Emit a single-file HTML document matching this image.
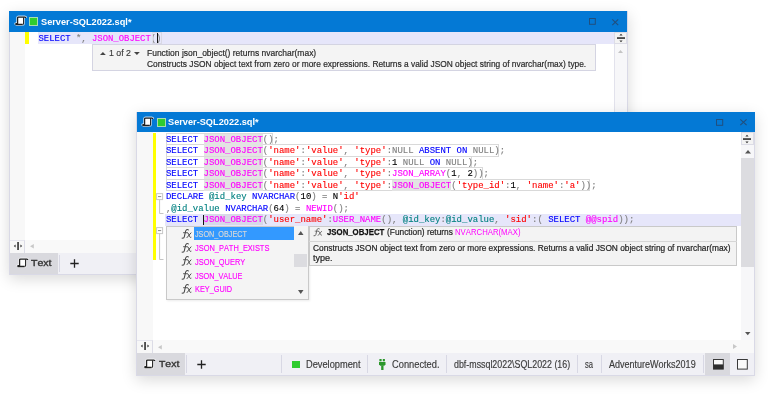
<!DOCTYPE html><html><head><meta charset="utf-8"><style>html,body{margin:0;padding:0;background:#fff;overflow:hidden;width:768px;height:401px;}#root{filter:blur(0.3px);position:relative;width:768px;height:401px;overflow:hidden;background:#fff;}</style></head><body><div id="root">
<div style="position:absolute;left:9px;top:11px;width:619px;height:264px;background:#fff;box-shadow:0 4px 14px rgba(0,0,0,0.15);border:1px solid #d9d9e6;border-top:none;box-sizing:border-box;"></div>
<div style="position:absolute;left:9px;top:11px;width:618px;height:21px;background:#0479d5;"></div>
<svg style="position:absolute;left:15px;top:15px;overflow:visible;" width="12" height="12" viewBox="0 0 12 12"><path d="M2.6 9.2 V3.1 Q2.6 2.0 3.7 2.0 H9.8 Q10.8 2.0 10.8 3.1" fill="none" stroke-width="2.8" stroke="rgba(255,255,255,0.75)"/><path d="M8.6 2.3 V8.6 Q8.6 9.5 7.6 9.5" fill="none" stroke-width="2.6" stroke="rgba(255,255,255,0.75)"/><path d="M0.5 9.6 Q0.5 8.7 1.4 8.7 H2.6 M0.7 9.5 H7.6" fill="none" stroke-width="2.9" stroke="rgba(255,255,255,0.75)"/><rect x="3.1" y="2.5" width="5" height="6.5" fill="#fff"/><path d="M2.6 9.2 V3.1 Q2.6 2.0 3.7 2.0 H9.8 Q10.8 2.0 10.8 3.1" fill="none" stroke-width="1.25" stroke="#222"/><path d="M8.6 2.3 V8.6 Q8.6 9.5 7.6 9.5" fill="none" stroke-width="1.1" stroke="#222"/><path d="M0.5 9.6 Q0.5 8.7 1.4 8.7 H2.6 M0.7 9.5 H7.6" fill="none" stroke-width="1.4" stroke="#222"/></svg>
<div style="position:absolute;left:30px;top:18px;width:7px;height:7px;background:#2fcc2f;box-shadow:0 0 0 1px #a8dcb0;"></div>
<div style="position:absolute;left:40.64px;top:16.80px;font-family:'Liberation Sans', sans-serif;font-size:9.5px;line-height:10.613px;color:#fff;white-space:pre;font-kerning:none;font-weight:bold;transform:scaleX(0.9680);transform-origin:0 0;">Server-SQL2022.sql*</div>
<svg style="position:absolute;left:588.7px;top:18.2px;overflow:visible;" width="8" height="8" viewBox="0 0 8 8"><rect x="0.5" y="0.5" width="5.8" height="5.8" fill="none" stroke="#214f7e" stroke-width="1"/></svg>
<svg style="position:absolute;left:612px;top:18.7px;overflow:visible;" width="8" height="8" viewBox="0 0 8 8"><path d="M0.3 0.3 L6.2 6.2 M6.2 0.3 L0.3 6.2" stroke="#214f7e" stroke-width="1.1"/></svg>
<div style="position:absolute;left:10px;top:32px;width:15px;height:208px;background:#f8f8f8;"></div>
<div style="position:absolute;left:25px;top:32px;width:4px;height:12px;background:#ffff00;"></div>
<div style="position:absolute;left:38px;top:32px;width:576px;height:12px;background:#e6e6fa;"></div>
<div style="position:absolute;left:38.5px;top:34.37px;font-family:'Liberation Mono', monospace;font-size:8.92px;line-height:10.105px;white-space:pre;"><span style="color:#0000ff;-webkit-text-stroke:0.12px #0000ff">SELECT</span><span style="color:#808080;-webkit-text-stroke:0.12px #808080"> *, </span><span style="color:#ff00ff;-webkit-text-stroke:0.12px #ff00ff">JSON_OBJECT</span><span style="color:#808080;-webkit-text-stroke:0.12px #808080">()</span></div>
<div style="position:absolute;left:152px;top:32px;width:10px;height:12px;border:1px solid #d8d8e4;border-left-color:#e0e0ea;box-sizing:border-box;"></div>
<div style="position:absolute;left:157px;top:33px;width:1px;height:10px;background:#111;"></div>
<div style="position:absolute;left:614px;top:32px;width:13px;height:208px;background:#f7f7f9;border-left:1px solid #e2e2ec;box-sizing:border-box;"></div>
<div style="position:absolute;left:614px;top:32px;width:13px;height:12px;background:#f3f3f3;border:1px solid #dcdce6;box-sizing:border-box;"></div>
<svg style="position:absolute;left:615.5px;top:33px;overflow:visible;" width="10" height="10" viewBox="0 0 10 10"><path d="M5 0.8 L6.6 2.6 H3.4 Z M5 9.2 L6.6 7.4 H3.4 Z" fill="#333"/><rect x="1" y="4.3" width="8" height="1.5" fill="#222"/></svg>
<svg style="position:absolute;left:617.8px;top:49.8px;overflow:visible;" width="5" height="3" viewBox="0 0 5 3"><path d="M0 3 L2.5 0 L5 3 Z" fill="#c4c4c4"/></svg>
<div style="position:absolute;left:92px;top:43.6px;width:504px;height:27.9px;background:#f4f4f4;border:1px solid #d4d4e2;box-sizing:border-box;"></div>
<svg style="position:absolute;left:100.0px;top:51.8px;overflow:visible;" width="5.8" height="3.0" viewBox="0 0 5.8 3.0"><path d="M0 3.0 L2.9 0 L5.8 3.0 Z" fill="#444"/></svg>
<div style="position:absolute;left:109.03px;top:48.17px;font-family:'Liberation Sans', sans-serif;font-size:9.2px;line-height:10.278px;color:#3a3a3a;white-space:pre;font-kerning:none;font-weight:normal;transform:scaleX(0.9563);transform-origin:0 0;-webkit-text-stroke:0.15px #3a3a3a;">1 of 2</div>
<svg style="position:absolute;left:133.9px;top:51.6px;overflow:visible;" width="5.8" height="3.0" viewBox="0 0 5.8 3.0"><path d="M0 0 L5.8 0 L2.9 3.0 Z" fill="#444"/></svg>
<div style="position:absolute;left:146.5px;top:48.17px;font-family:'Liberation Sans', sans-serif;font-size:9.2px;line-height:10.278px;color:#2a2a2a;white-space:pre;font-kerning:none;font-weight:normal;transform:scaleX(0.9230);transform-origin:0 0;-webkit-text-stroke:0.2px #2a2a2a;">Function json_object() returns nvarchar(max)</div>
<div style="position:absolute;left:146.77px;top:59.17px;font-family:'Liberation Sans', sans-serif;font-size:9.2px;line-height:10.278px;color:#2a2a2a;white-space:pre;font-kerning:none;font-weight:normal;transform:scaleX(0.9102);transform-origin:0 0;-webkit-text-stroke:0.2px #2a2a2a;">Constructs JSON object text from zero or more expressions. Returns a valid JSON object string of nvarchar(max) type.</div>
<div style="position:absolute;left:10px;top:240px;width:604px;height:13px;background:#f9f9f9;"></div>
<div style="position:absolute;left:10px;top:240px;width:15px;height:13px;background:#f7f7f7;border-right:1px solid #dcdce6;border-top:1px solid #e6e6ee;box-sizing:border-box;"></div>
<svg style="position:absolute;left:12.5px;top:242px;overflow:visible;" width="10" height="8" viewBox="0 0 10 8"><rect x="4.3" y="0" width="1.5" height="8" fill="#222"/><path d="M0.8 4 L2.6 2.4 V5.6 Z M9.2 4 L7.4 2.4 V5.6 Z" fill="#333"/></svg>
<svg style="position:absolute;left:30.2px;top:244.0px;overflow:visible;" width="3.8" height="4.6" viewBox="0 0 3.8 4.6"><path d="M3.8 0 L0 2.3 L3.8 4.6 Z" fill="#c8c8c8"/></svg>
<div style="position:absolute;left:10px;top:253px;width:617px;height:21px;background:#f0f0f5;"></div>
<div style="position:absolute;left:10px;top:253px;width:48px;height:21px;background:#d9d9de;"></div>
<svg style="position:absolute;left:17px;top:257px;overflow:visible;" width="12" height="12" viewBox="0 0 12 12"><path d="M2.6 9.2 V3.1 Q2.6 2.0 3.7 2.0 H9.8 Q10.8 2.0 10.8 3.1" fill="none" stroke-width="2.8" stroke="rgba(255,255,255,0.6)"/><path d="M8.6 2.3 V8.6 Q8.6 9.5 7.6 9.5" fill="none" stroke-width="2.6" stroke="rgba(255,255,255,0.6)"/><path d="M0.5 9.6 Q0.5 8.7 1.4 8.7 H2.6 M0.7 9.5 H7.6" fill="none" stroke-width="2.9" stroke="rgba(255,255,255,0.6)"/><rect x="3.1" y="2.5" width="5" height="6.5" fill="#fff"/><path d="M2.6 9.2 V3.1 Q2.6 2.0 3.7 2.0 H9.8 Q10.8 2.0 10.8 3.1" fill="none" stroke-width="1.25" stroke="#222"/><path d="M8.6 2.3 V8.6 Q8.6 9.5 7.6 9.5" fill="none" stroke-width="1.1" stroke="#222"/><path d="M0.5 9.6 Q0.5 8.7 1.4 8.7 H2.6 M0.7 9.5 H7.6" fill="none" stroke-width="1.4" stroke="#222"/></svg>
<div style="position:absolute;left:31.16px;top:258.27px;font-family:'Liberation Sans', sans-serif;font-size:9.2px;line-height:10.278px;color:#333;white-space:pre;font-kerning:none;font-weight:normal;transform:scaleX(1.1465);transform-origin:0 0;-webkit-text-stroke:0.35px #333;">Text</div>
<div style="position:absolute;left:59px;top:255px;width:1px;height:17px;background:#d8d8e4;"></div>
<svg style="position:absolute;left:69.5px;top:259px;overflow:visible;" width="9" height="9" viewBox="0 0 9 9"><path d="M4.5 0.3 V8.7 M0.3 4.5 H8.7" stroke="#222" stroke-width="1.3"/></svg>
<div style="position:absolute;left:136px;top:112px;width:619px;height:264px;background:#fff;box-shadow:0 4px 14px rgba(0,0,0,0.15);border:1px solid #d9d9e6;border-top:none;box-sizing:border-box;"></div>
<div style="position:absolute;left:137px;top:112px;width:618px;height:20px;background:#0479d5;"></div>
<svg style="position:absolute;left:142px;top:116px;overflow:visible;" width="12" height="12" viewBox="0 0 12 12"><path d="M2.6 9.2 V3.1 Q2.6 2.0 3.7 2.0 H9.8 Q10.8 2.0 10.8 3.1" fill="none" stroke-width="2.8" stroke="rgba(255,255,255,0.75)"/><path d="M8.6 2.3 V8.6 Q8.6 9.5 7.6 9.5" fill="none" stroke-width="2.6" stroke="rgba(255,255,255,0.75)"/><path d="M0.5 9.6 Q0.5 8.7 1.4 8.7 H2.6 M0.7 9.5 H7.6" fill="none" stroke-width="2.9" stroke="rgba(255,255,255,0.75)"/><rect x="3.1" y="2.5" width="5" height="6.5" fill="#fff"/><path d="M2.6 9.2 V3.1 Q2.6 2.0 3.7 2.0 H9.8 Q10.8 2.0 10.8 3.1" fill="none" stroke-width="1.25" stroke="#222"/><path d="M8.6 2.3 V8.6 Q8.6 9.5 7.6 9.5" fill="none" stroke-width="1.1" stroke="#222"/><path d="M0.5 9.6 Q0.5 8.7 1.4 8.7 H2.6 M0.7 9.5 H7.6" fill="none" stroke-width="1.4" stroke="#222"/></svg>
<div style="position:absolute;left:157.5px;top:119px;width:7.0px;height:7px;background:#2fcc2f;box-shadow:0 0 0 1px #a8dcb0;"></div>
<div style="position:absolute;left:168.13px;top:116.60px;font-family:'Liberation Sans', sans-serif;font-size:9.5px;line-height:10.613px;color:#fff;white-space:pre;font-kerning:none;font-weight:bold;transform:scaleX(0.9690);transform-origin:0 0;">Server-SQL2022.sql*</div>
<svg style="position:absolute;left:715.8px;top:119px;overflow:visible;" width="8" height="8" viewBox="0 0 8 8"><rect x="0.5" y="0.5" width="6.2" height="5.8" fill="none" stroke="#214f7e" stroke-width="1"/></svg>
<svg style="position:absolute;left:739.6px;top:119.3px;overflow:visible;" width="8" height="8" viewBox="0 0 8 8"><path d="M0.3 0.3 L6.6 6.2 M6.6 0.3 L0.3 6.2" stroke="#214f7e" stroke-width="1.1"/></svg>
<div style="position:absolute;left:137px;top:132px;width:16px;height:208px;background:#f8f8f8;"></div>
<div style="position:absolute;left:153px;top:133px;width:3px;height:126.5px;background:#ffff00;"></div>
<div style="position:absolute;left:165px;top:214.26px;width:576px;height:11.28000000000003px;background:#e6e6fa;"></div>
<div style="position:absolute;left:165.5px;top:133.0px;width:107.19999999999999px;height:12.079999999999984px;border:1px solid #d9d9d9;box-sizing:border-box;"></div>
<div style="position:absolute;left:165.5px;top:144.48px;width:333.16px;height:12.080000000000013px;border:1px solid #d9d9d9;box-sizing:border-box;"></div>
<div style="position:absolute;left:165.5px;top:155.96px;width:306.25999999999993px;height:12.079999999999984px;border:1px solid #d9d9d9;box-sizing:border-box;"></div>
<div style="position:absolute;left:165.5px;top:167.44px;width:317.02000000000004px;height:12.079999999999984px;border:1px solid #d9d9d9;box-sizing:border-box;"></div>
<div style="position:absolute;left:165.5px;top:178.92px;width:424.62px;height:12.080000000000013px;border:1px solid #d9d9d9;box-sizing:border-box;"></div>
<div style="position:absolute;left:203.56px;top:134.0px;width:59.18000000000001px;height:10.879999999999995px;background:#e3e3e3;"></div>
<div style="position:absolute;left:203.56px;top:145.48px;width:59.18000000000001px;height:10.880000000000024px;background:#e3e3e3;"></div>
<div style="position:absolute;left:203.56px;top:156.96px;width:59.18000000000001px;height:10.879999999999995px;background:#e3e3e3;"></div>
<div style="position:absolute;left:203.56px;top:168.44px;width:59.18000000000001px;height:10.879999999999995px;background:#e3e3e3;"></div>
<div style="position:absolute;left:203.56px;top:179.92px;width:59.18000000000001px;height:10.880000000000024px;background:#e3e3e3;"></div>
<div style="position:absolute;left:391.86px;top:179.92px;width:59.17999999999995px;height:10.880000000000024px;background:#e3e3e3;"></div>
<div style="position:absolute;left:203.56px;top:214.35999999999999px;width:59.18000000000001px;height:10.880000000000024px;background:#d8d8e8;"></div>
<div style="position:absolute;left:165.9px;top:134.73px;font-family:'Liberation Mono', monospace;font-size:8.97px;line-height:10.161px;white-space:pre;"><span style="color:#0000ff;-webkit-text-stroke:0.12px #0000ff">SELECT</span><span style="color:#808080;-webkit-text-stroke:0.12px #808080"> </span><span style="color:#ff00ff;-webkit-text-stroke:0.12px #ff00ff">JSON_OBJECT</span><span style="color:#808080;-webkit-text-stroke:0.12px #808080">();</span></div>
<div style="position:absolute;left:165.9px;top:146.21px;font-family:'Liberation Mono', monospace;font-size:8.97px;line-height:10.161px;white-space:pre;"><span style="color:#0000ff;-webkit-text-stroke:0.12px #0000ff">SELECT</span><span style="color:#808080;-webkit-text-stroke:0.12px #808080"> </span><span style="color:#ff00ff;-webkit-text-stroke:0.12px #ff00ff">JSON_OBJECT</span><span style="color:#808080;-webkit-text-stroke:0.12px #808080">(</span><span style="color:#ff0000;-webkit-text-stroke:0.12px #ff0000">'name'</span><span style="color:#808080;-webkit-text-stroke:0.12px #808080">:</span><span style="color:#ff0000;-webkit-text-stroke:0.12px #ff0000">'value'</span><span style="color:#808080;-webkit-text-stroke:0.12px #808080">, </span><span style="color:#ff0000;-webkit-text-stroke:0.12px #ff0000">'type'</span><span style="color:#808080;-webkit-text-stroke:0.12px #808080">:NULL </span><span style="color:#0000ff;-webkit-text-stroke:0.12px #0000ff">ABSENT ON</span><span style="color:#808080;-webkit-text-stroke:0.12px #808080"> NULL);</span></div>
<div style="position:absolute;left:165.9px;top:157.69px;font-family:'Liberation Mono', monospace;font-size:8.97px;line-height:10.161px;white-space:pre;"><span style="color:#0000ff;-webkit-text-stroke:0.12px #0000ff">SELECT</span><span style="color:#808080;-webkit-text-stroke:0.12px #808080"> </span><span style="color:#ff00ff;-webkit-text-stroke:0.12px #ff00ff">JSON_OBJECT</span><span style="color:#808080;-webkit-text-stroke:0.12px #808080">(</span><span style="color:#ff0000;-webkit-text-stroke:0.12px #ff0000">'name'</span><span style="color:#808080;-webkit-text-stroke:0.12px #808080">:</span><span style="color:#ff0000;-webkit-text-stroke:0.12px #ff0000">'value'</span><span style="color:#808080;-webkit-text-stroke:0.12px #808080">, </span><span style="color:#ff0000;-webkit-text-stroke:0.12px #ff0000">'type'</span><span style="color:#808080;-webkit-text-stroke:0.12px #808080">:</span><span style="color:#000000;-webkit-text-stroke:0.12px #000000">1</span><span style="color:#808080;-webkit-text-stroke:0.12px #808080"> NULL </span><span style="color:#0000ff;-webkit-text-stroke:0.12px #0000ff">ON</span><span style="color:#808080;-webkit-text-stroke:0.12px #808080"> NULL);</span></div>
<div style="position:absolute;left:165.9px;top:169.17px;font-family:'Liberation Mono', monospace;font-size:8.97px;line-height:10.161px;white-space:pre;"><span style="color:#0000ff;-webkit-text-stroke:0.12px #0000ff">SELECT</span><span style="color:#808080;-webkit-text-stroke:0.12px #808080"> </span><span style="color:#ff00ff;-webkit-text-stroke:0.12px #ff00ff">JSON_OBJECT</span><span style="color:#808080;-webkit-text-stroke:0.12px #808080">(</span><span style="color:#ff0000;-webkit-text-stroke:0.12px #ff0000">'name'</span><span style="color:#808080;-webkit-text-stroke:0.12px #808080">:</span><span style="color:#ff0000;-webkit-text-stroke:0.12px #ff0000">'value'</span><span style="color:#808080;-webkit-text-stroke:0.12px #808080">, </span><span style="color:#ff0000;-webkit-text-stroke:0.12px #ff0000">'type'</span><span style="color:#808080;-webkit-text-stroke:0.12px #808080">:</span><span style="color:#ff00ff;-webkit-text-stroke:0.12px #ff00ff">JSON_ARRAY</span><span style="color:#808080;-webkit-text-stroke:0.12px #808080">(</span><span style="color:#000000;-webkit-text-stroke:0.12px #000000">1</span><span style="color:#808080;-webkit-text-stroke:0.12px #808080">, </span><span style="color:#000000;-webkit-text-stroke:0.12px #000000">2</span><span style="color:#808080;-webkit-text-stroke:0.12px #808080">));</span></div>
<div style="position:absolute;left:165.9px;top:180.65px;font-family:'Liberation Mono', monospace;font-size:8.97px;line-height:10.161px;white-space:pre;"><span style="color:#0000ff;-webkit-text-stroke:0.12px #0000ff">SELECT</span><span style="color:#808080;-webkit-text-stroke:0.12px #808080"> </span><span style="color:#ff00ff;-webkit-text-stroke:0.12px #ff00ff">JSON_OBJECT</span><span style="color:#808080;-webkit-text-stroke:0.12px #808080">(</span><span style="color:#ff0000;-webkit-text-stroke:0.12px #ff0000">'name'</span><span style="color:#808080;-webkit-text-stroke:0.12px #808080">:</span><span style="color:#ff0000;-webkit-text-stroke:0.12px #ff0000">'value'</span><span style="color:#808080;-webkit-text-stroke:0.12px #808080">, </span><span style="color:#ff0000;-webkit-text-stroke:0.12px #ff0000">'type'</span><span style="color:#808080;-webkit-text-stroke:0.12px #808080">:</span><span style="color:#ff00ff;-webkit-text-stroke:0.12px #ff00ff">JSON_OBJECT</span><span style="color:#808080;-webkit-text-stroke:0.12px #808080">(</span><span style="color:#ff0000;-webkit-text-stroke:0.12px #ff0000">'type_id'</span><span style="color:#808080;-webkit-text-stroke:0.12px #808080">:</span><span style="color:#000000;-webkit-text-stroke:0.12px #000000">1</span><span style="color:#808080;-webkit-text-stroke:0.12px #808080">, </span><span style="color:#ff0000;-webkit-text-stroke:0.12px #ff0000">'name'</span><span style="color:#808080;-webkit-text-stroke:0.12px #808080">:</span><span style="color:#ff0000;-webkit-text-stroke:0.12px #ff0000">'a'</span><span style="color:#808080;-webkit-text-stroke:0.12px #808080">));</span></div>
<div style="position:absolute;left:165.9px;top:192.13px;font-family:'Liberation Mono', monospace;font-size:8.97px;line-height:10.161px;white-space:pre;"><span style="color:#0000ff;-webkit-text-stroke:0.12px #0000ff">DECLARE</span><span style="color:#808080;-webkit-text-stroke:0.12px #808080"> </span><span style="color:#008080;-webkit-text-stroke:0.12px #008080">@id_key</span><span style="color:#808080;-webkit-text-stroke:0.12px #808080"> </span><span style="color:#0000ff;-webkit-text-stroke:0.12px #0000ff">NVARCHAR</span><span style="color:#808080;-webkit-text-stroke:0.12px #808080">(</span><span style="color:#000000;-webkit-text-stroke:0.12px #000000">10</span><span style="color:#808080;-webkit-text-stroke:0.12px #808080">) = </span><span style="color:#000000;-webkit-text-stroke:0.12px #000000">N</span><span style="color:#ff0000;-webkit-text-stroke:0.12px #ff0000">'id'</span></div>
<div style="position:absolute;left:165.9px;top:203.61px;font-family:'Liberation Mono', monospace;font-size:8.97px;line-height:10.161px;white-space:pre;"><span style="color:#808080;-webkit-text-stroke:0.12px #808080">,</span><span style="color:#008080;-webkit-text-stroke:0.12px #008080">@id_value</span><span style="color:#808080;-webkit-text-stroke:0.12px #808080"> </span><span style="color:#0000ff;-webkit-text-stroke:0.12px #0000ff">NVARCHAR</span><span style="color:#808080;-webkit-text-stroke:0.12px #808080">(</span><span style="color:#000000;-webkit-text-stroke:0.12px #000000">64</span><span style="color:#808080;-webkit-text-stroke:0.12px #808080">) = </span><span style="color:#ff00ff;-webkit-text-stroke:0.12px #ff00ff">NEWID</span><span style="color:#808080;-webkit-text-stroke:0.12px #808080">();</span></div>
<div style="position:absolute;left:165.9px;top:215.09px;font-family:'Liberation Mono', monospace;font-size:8.97px;line-height:10.161px;white-space:pre;"><span style="color:#0000ff;-webkit-text-stroke:0.12px #0000ff">SELECT</span><span style="color:#808080;-webkit-text-stroke:0.12px #808080"> </span><span style="color:#ff00ff;-webkit-text-stroke:0.12px #ff00ff">JSON_OBJECT</span><span style="color:#808080;-webkit-text-stroke:0.12px #808080">(</span><span style="color:#ff0000;-webkit-text-stroke:0.12px #ff0000">'user_name'</span><span style="color:#808080;-webkit-text-stroke:0.12px #808080">:</span><span style="color:#ff00ff;-webkit-text-stroke:0.12px #ff00ff">USER_NAME</span><span style="color:#808080;-webkit-text-stroke:0.12px #808080">(), </span><span style="color:#008080;-webkit-text-stroke:0.12px #008080">@id_key</span><span style="color:#808080;-webkit-text-stroke:0.12px #808080">:</span><span style="color:#008080;-webkit-text-stroke:0.12px #008080">@id_value</span><span style="color:#808080;-webkit-text-stroke:0.12px #808080">, </span><span style="color:#ff0000;-webkit-text-stroke:0.12px #ff0000">'sid'</span><span style="color:#808080;-webkit-text-stroke:0.12px #808080">:( </span><span style="color:#0000ff;-webkit-text-stroke:0.12px #0000ff">SELECT</span><span style="color:#808080;-webkit-text-stroke:0.12px #808080"> </span><span style="color:#ff00ff;-webkit-text-stroke:0.12px #ff00ff">@@spid</span><span style="color:#808080;-webkit-text-stroke:0.12px #808080">));</span></div>
<div style="position:absolute;left:203.26px;top:214.95999999999998px;width:1.200000000000017px;height:9.78000000000003px;background:#111;"></div>
<svg style="position:absolute;left:155.5px;top:192.5px;overflow:visible;" width="8" height="22" viewBox="0 0 8 22"><rect x="0.6" y="0.6" width="6" height="6" fill="#fff" stroke="#c8c8c8"/><path d="M2 3.6 H5.2" stroke="#8a8a8a"/><path d="M3.6 6.6 V20.5 H7.5" fill="none" stroke="#c4c4c4"/></svg>
<svg style="position:absolute;left:155.5px;top:226.5px;overflow:visible;" width="8" height="34" viewBox="0 0 8 34"><rect x="0.6" y="0.6" width="6" height="6" fill="#fff" stroke="#c8c8c8"/><path d="M2 3.6 H5.2" stroke="#8a8a8a"/><path d="M3.6 6.6 V32.5 H7.5" fill="none" stroke="#c4c4c4"/></svg>
<div style="position:absolute;left:741px;top:132px;width:13px;height:208px;background:#f7f7f9;"></div>
<div style="position:absolute;left:741px;top:132px;width:13px;height:12.5px;background:#f3f3f3;border:1px solid #dcdce6;box-sizing:border-box;"></div>
<svg style="position:absolute;left:742.2px;top:134.4px;overflow:visible;" width="10" height="10" viewBox="0 0 10 10"><path d="M5 0.8 L6.6 2.6 H3.4 Z M5 9.2 L6.6 7.4 H3.4 Z" fill="#333"/><rect x="1" y="4.3" width="8" height="1.5" fill="#222"/></svg>
<svg style="position:absolute;left:745.0px;top:150px;overflow:visible;" width="6" height="3.6" viewBox="0 0 6 3.6"><path d="M0 3.6 L3.0 0 L6 3.6 Z" fill="#555"/></svg>
<div style="position:absolute;left:741px;top:158px;width:13px;height:108.5px;background:#dcdce0;"></div>
<svg style="position:absolute;left:745.25px;top:331.8px;overflow:visible;" width="5.5" height="3.2" viewBox="0 0 5.5 3.2"><path d="M0 0 L5.5 0 L2.75 3.2 Z" fill="#555"/></svg>
<div style="position:absolute;left:137px;top:340px;width:617px;height:13px;background:#f9f9f9;"></div>
<div style="position:absolute;left:137px;top:340px;width:16px;height:13px;background:#f7f7f7;border-right:1px solid #dcdce6;border-top:1px solid #e6e6ee;box-sizing:border-box;"></div>
<svg style="position:absolute;left:140px;top:342.2px;overflow:visible;" width="10" height="8" viewBox="0 0 10 8"><rect x="4.3" y="0" width="1.5" height="8" fill="#222"/><path d="M0.8 4 L2.6 2.4 V5.6 Z M9.2 4 L7.4 2.4 V5.6 Z" fill="#333"/></svg>
<svg style="position:absolute;left:157.8px;top:344.59999999999997px;overflow:visible;" width="3.8" height="4.6" viewBox="0 0 3.8 4.6"><path d="M3.8 0 L0 2.3 L3.8 4.6 Z" fill="#c8c8c8"/></svg>
<svg style="position:absolute;left:732.5px;top:344.0px;overflow:visible;" width="4" height="5" viewBox="0 0 4 5"><path d="M0 0 L4 2.5 L0 5 Z" fill="#c8c8c8"/></svg>
<div style="position:absolute;left:137px;top:353px;width:617px;height:22px;background:#f0f0f5;"></div>
<div style="position:absolute;left:137px;top:353px;width:48px;height:22px;background:#d9d9de;"></div>
<svg style="position:absolute;left:144px;top:358px;overflow:visible;" width="12" height="12" viewBox="0 0 12 12"><path d="M2.6 9.2 V3.1 Q2.6 2.0 3.7 2.0 H9.8 Q10.8 2.0 10.8 3.1" fill="none" stroke-width="2.8" stroke="rgba(255,255,255,0.6)"/><path d="M8.6 2.3 V8.6 Q8.6 9.5 7.6 9.5" fill="none" stroke-width="2.6" stroke="rgba(255,255,255,0.6)"/><path d="M0.5 9.6 Q0.5 8.7 1.4 8.7 H2.6 M0.7 9.5 H7.6" fill="none" stroke-width="2.9" stroke="rgba(255,255,255,0.6)"/><rect x="3.1" y="2.5" width="5" height="6.5" fill="#fff"/><path d="M2.6 9.2 V3.1 Q2.6 2.0 3.7 2.0 H9.8 Q10.8 2.0 10.8 3.1" fill="none" stroke-width="1.25" stroke="#222"/><path d="M8.6 2.3 V8.6 Q8.6 9.5 7.6 9.5" fill="none" stroke-width="1.1" stroke="#222"/><path d="M0.5 9.6 Q0.5 8.7 1.4 8.7 H2.6 M0.7 9.5 H7.6" fill="none" stroke-width="1.4" stroke="#222"/></svg>
<div style="position:absolute;left:158.77px;top:358.67px;font-family:'Liberation Sans', sans-serif;font-size:9.2px;line-height:10.278px;color:#333;white-space:pre;font-kerning:none;font-weight:normal;transform:scaleX(1.1352);transform-origin:0 0;-webkit-text-stroke:0.35px #333;">Text</div>
<div style="position:absolute;left:186px;top:355px;width:1px;height:18px;background:#d8d8e4;"></div>
<div style="position:absolute;left:281px;top:355px;width:1px;height:18px;background:#d8d8e4;"></div>
<div style="position:absolute;left:367px;top:355px;width:1px;height:18px;background:#d8d8e4;"></div>
<div style="position:absolute;left:446px;top:355px;width:1px;height:18px;background:#d8d8e4;"></div>
<div style="position:absolute;left:577px;top:355px;width:1px;height:18px;background:#d8d8e4;"></div>
<div style="position:absolute;left:601px;top:355px;width:1px;height:18px;background:#d8d8e4;"></div>
<div style="position:absolute;left:703px;top:355px;width:1px;height:18px;background:#d8d8e4;"></div>
<svg style="position:absolute;left:196.5px;top:359.5px;overflow:visible;" width="9" height="9" viewBox="0 0 9 9"><path d="M4.5 0.3 V8.7 M0.3 4.5 H8.7" stroke="#222" stroke-width="1.3"/></svg>
<div style="position:absolute;left:292px;top:361px;width:8px;height:7px;background:#2fcc2f;"></div>
<div style="position:absolute;left:305.54px;top:358.55px;font-family:'Liberation Sans', sans-serif;font-size:10px;line-height:11.172px;color:#3a3a3a;white-space:pre;font-kerning:none;font-weight:normal;transform:scaleX(0.9254);transform-origin:0 0;-webkit-text-stroke:0.15px #3a3a3a;">Development</div>
<svg style="position:absolute;left:378.7px;top:358.7px;overflow:visible;" width="7" height="11" viewBox="0 0 7 11"><rect x="0.4" y="0" width="2.2" height="2.3" fill="#2a962a"/><rect x="3.8" y="0" width="2.1" height="2.3" fill="#2a962a"/><path d="M0 3.1 H6.5 V5.2 L5.4 6.8 H1.1 L0 5.2 Z" fill="#2a962a"/><rect x="2.2" y="6.5" width="2.3" height="4.5" fill="#2a962a"/></svg>
<div style="position:absolute;left:391.63px;top:358.55px;font-family:'Liberation Sans', sans-serif;font-size:10px;line-height:11.172px;color:#3a3a3a;white-space:pre;font-kerning:none;font-weight:normal;transform:scaleX(0.9291);transform-origin:0 0;-webkit-text-stroke:0.15px #3a3a3a;">Connected.</div>
<div style="position:absolute;left:453.83px;top:358.55px;font-family:'Liberation Sans', sans-serif;font-size:10px;line-height:11.172px;color:#3a3a3a;white-space:pre;font-kerning:none;font-weight:normal;transform:scaleX(0.8852);transform-origin:0 0;-webkit-text-stroke:0.15px #3a3a3a;">dbf-mssql2022\SQL2022 (16)</div>
<div style="position:absolute;left:585.29px;top:358.55px;font-family:'Liberation Sans', sans-serif;font-size:10px;line-height:11.172px;color:#3a3a3a;white-space:pre;font-kerning:none;font-weight:normal;transform:scaleX(0.7585);transform-origin:0 0;-webkit-text-stroke:0.15px #3a3a3a;">sa</div>
<div style="position:absolute;left:609.18px;top:358.55px;font-family:'Liberation Sans', sans-serif;font-size:10px;line-height:11.172px;color:#3a3a3a;white-space:pre;font-kerning:none;font-weight:normal;transform:scaleX(0.9010);transform-origin:0 0;-webkit-text-stroke:0.15px #3a3a3a;">AdventureWorks2019</div>
<div style="position:absolute;left:705px;top:353px;width:25px;height:22px;background:#d9d9de;"></div>
<svg style="position:absolute;left:712.5px;top:358.8px;overflow:visible;" width="11" height="11" viewBox="0 0 11 11"><rect x="0.5" y="0.5" width="9.8" height="9.6" fill="#fafafa" stroke="#3a3a3a" stroke-width="1"/><rect x="0.5" y="5.4" width="9.8" height="4.7" fill="#2e2e2e"/></svg>
<svg style="position:absolute;left:736.6px;top:358.8px;overflow:visible;" width="11" height="11" viewBox="0 0 11 11"><rect x="0.5" y="0.5" width="9.8" height="9.6" fill="#fafafa" stroke="#3a3a3a" stroke-width="1"/></svg>
<div style="position:absolute;left:166px;top:226px;width:143px;height:73.5px;background:#f4f4f4;border:1px solid #c9c9c9;box-sizing:border-box;box-shadow:1px 1px 2px rgba(0,0,0,0.08);"></div>
<div style="position:absolute;left:193.5px;top:226.7px;width:100.5px;height:13.600000000000023px;background:#3399ff;"></div>
<svg style="position:absolute;left:181.0px;top:228.79999999999998px;overflow:visible;" width="11" height="11" viewBox="0 0 11 11"><g transform="scale(1.0)" fill="none" stroke="#454545" stroke-linecap="round"><path d="M7.4 0.9 Q6.3 0.2 5.3 1.0 Q4.6 1.7 4.3 3.4 L3.3 7.8 Q2.9 9.5 1.1 9.1" stroke-width="1.05"/><path d="M2.5 3.7 H5.9" stroke-width="0.85"/><path d="M6.3 3.8 Q7.0 3.5 7.5 4.6 L8.6 7.6 Q9.0 8.8 10.0 8.3" stroke-width="0.95"/><path d="M10.0 3.9 L6.0 8.6" stroke-width="0.95"/></g></svg>
<div style="position:absolute;left:195.49px;top:229.18px;font-family:'Liberation Sans', sans-serif;font-size:9.3px;line-height:10.390px;color:#d8d8d8;white-space:pre;font-kerning:none;font-weight:normal;transform:scaleX(0.7797);transform-origin:0 0;-webkit-text-stroke:0.15px #d8d8d8;">JSON_OBJECT</div>
<svg style="position:absolute;left:181.0px;top:242.6px;overflow:visible;" width="11" height="11" viewBox="0 0 11 11"><g transform="scale(1.0)" fill="none" stroke="#454545" stroke-linecap="round"><path d="M7.4 0.9 Q6.3 0.2 5.3 1.0 Q4.6 1.7 4.3 3.4 L3.3 7.8 Q2.9 9.5 1.1 9.1" stroke-width="1.05"/><path d="M2.5 3.7 H5.9" stroke-width="0.85"/><path d="M6.3 3.8 Q7.0 3.5 7.5 4.6 L8.6 7.6 Q9.0 8.8 10.0 8.3" stroke-width="0.95"/><path d="M10.0 3.9 L6.0 8.6" stroke-width="0.95"/></g></svg>
<div style="position:absolute;left:195.48px;top:242.98px;font-family:'Liberation Sans', sans-serif;font-size:9.3px;line-height:10.390px;color:#ff00ff;white-space:pre;font-kerning:none;font-weight:normal;transform:scaleX(0.7993);transform-origin:0 0;-webkit-text-stroke:0.15px #ff00ff;">JSON_PATH_EXISTS</div>
<svg style="position:absolute;left:181.0px;top:256.4px;overflow:visible;" width="11" height="11" viewBox="0 0 11 11"><g transform="scale(1.0)" fill="none" stroke="#454545" stroke-linecap="round"><path d="M7.4 0.9 Q6.3 0.2 5.3 1.0 Q4.6 1.7 4.3 3.4 L3.3 7.8 Q2.9 9.5 1.1 9.1" stroke-width="1.05"/><path d="M2.5 3.7 H5.9" stroke-width="0.85"/><path d="M6.3 3.8 Q7.0 3.5 7.5 4.6 L8.6 7.6 Q9.0 8.8 10.0 8.3" stroke-width="0.95"/><path d="M10.0 3.9 L6.0 8.6" stroke-width="0.95"/></g></svg>
<div style="position:absolute;left:195.48px;top:256.78px;font-family:'Liberation Sans', sans-serif;font-size:9.3px;line-height:10.390px;color:#ff00ff;white-space:pre;font-kerning:none;font-weight:normal;transform:scaleX(0.7959);transform-origin:0 0;-webkit-text-stroke:0.15px #ff00ff;">JSON_QUERY</div>
<svg style="position:absolute;left:181.0px;top:270.2px;overflow:visible;" width="11" height="11" viewBox="0 0 11 11"><g transform="scale(1.0)" fill="none" stroke="#454545" stroke-linecap="round"><path d="M7.4 0.9 Q6.3 0.2 5.3 1.0 Q4.6 1.7 4.3 3.4 L3.3 7.8 Q2.9 9.5 1.1 9.1" stroke-width="1.05"/><path d="M2.5 3.7 H5.9" stroke-width="0.85"/><path d="M6.3 3.8 Q7.0 3.5 7.5 4.6 L8.6 7.6 Q9.0 8.8 10.0 8.3" stroke-width="0.95"/><path d="M10.0 3.9 L6.0 8.6" stroke-width="0.95"/></g></svg>
<div style="position:absolute;left:195.49px;top:270.58px;font-family:'Liberation Sans', sans-serif;font-size:9.3px;line-height:10.390px;color:#ff00ff;white-space:pre;font-kerning:none;font-weight:normal;transform:scaleX(0.7843);transform-origin:0 0;-webkit-text-stroke:0.15px #ff00ff;">JSON_VALUE</div>
<svg style="position:absolute;left:181.0px;top:284.0px;overflow:visible;" width="11" height="11" viewBox="0 0 11 11"><g transform="scale(1.0)" fill="none" stroke="#454545" stroke-linecap="round"><path d="M7.4 0.9 Q6.3 0.2 5.3 1.0 Q4.6 1.7 4.3 3.4 L3.3 7.8 Q2.9 9.5 1.1 9.1" stroke-width="1.05"/><path d="M2.5 3.7 H5.9" stroke-width="0.85"/><path d="M6.3 3.8 Q7.0 3.5 7.5 4.6 L8.6 7.6 Q9.0 8.8 10.0 8.3" stroke-width="0.95"/><path d="M10.0 3.9 L6.0 8.6" stroke-width="0.95"/></g></svg>
<div style="position:absolute;left:195.0px;top:284.38px;font-family:'Liberation Sans', sans-serif;font-size:9.3px;line-height:10.390px;color:#ff00ff;white-space:pre;font-kerning:none;font-weight:normal;transform:scaleX(0.7878);transform-origin:0 0;-webkit-text-stroke:0.15px #ff00ff;">KEY_GUID</div>
<div style="position:absolute;left:293.5px;top:226px;width:14.5px;height:72.5px;background:#f4f4f4;"></div>
<svg style="position:absolute;left:297.95px;top:231px;overflow:visible;" width="5.5" height="4" viewBox="0 0 5.5 4"><path d="M0 4 L2.75 0 L5.5 4 Z" fill="#555"/></svg>
<div style="position:absolute;left:294.3px;top:254px;width:12.699999999999989px;height:13px;background:#dcdce0;"></div>
<svg style="position:absolute;left:297.95px;top:290px;overflow:visible;" width="5.5" height="4" viewBox="0 0 5.5 4"><path d="M0 0 L5.5 0 L2.75 4 Z" fill="#555"/></svg>
<div style="position:absolute;left:308.5px;top:226px;width:428.5px;height:39.5px;background:#f3f3f3;border:1px solid #c9c9c9;box-sizing:border-box;"></div>
<div style="position:absolute;left:308.5px;top:241.2px;width:428.5px;height:1.0px;background:#d6d6d6;"></div>
<svg style="position:absolute;left:313.0px;top:227.9px;overflow:visible;" width="11" height="11" viewBox="0 0 11 11"><g transform="scale(0.86)" fill="none" stroke="#5a5a5a" stroke-linecap="round"><path d="M7.4 0.9 Q6.3 0.2 5.3 1.0 Q4.6 1.7 4.3 3.4 L3.3 7.8 Q2.9 9.5 1.1 9.1" stroke-width="1.05"/><path d="M2.5 3.7 H5.9" stroke-width="0.85"/><path d="M6.3 3.8 Q7.0 3.5 7.5 4.6 L8.6 7.6 Q9.0 8.8 10.0 8.3" stroke-width="0.95"/><path d="M10.0 3.9 L6.0 8.6" stroke-width="0.95"/></g></svg>
<div style="position:absolute;left:326.58px;top:227.38px;font-family:'Liberation Sans', sans-serif;font-size:9.3px;line-height:10.390px;color:#111;white-space:pre;font-kerning:none;font-weight:bold;transform:scaleX(0.8400);transform-origin:0 0;-webkit-text-stroke:0.25px #111;">JSON_OBJECT</div>
<div style="position:absolute;left:387.28px;top:227.38px;font-family:'Liberation Sans', sans-serif;font-size:9.3px;line-height:10.390px;color:#222;white-space:pre;font-kerning:none;font-weight:normal;transform:scaleX(0.8982);transform-origin:0 0;-webkit-text-stroke:0.2px #222;">(Function) returns</div>
<div style="position:absolute;left:455.16px;top:227.38px;font-family:'Liberation Sans', sans-serif;font-size:9.3px;line-height:10.390px;color:#ff00ff;white-space:pre;font-kerning:none;font-weight:normal;transform:scaleX(0.8342);transform-origin:0 0;">NVARCHAR(MAX)</div>
<div style="position:absolute;left:313.08px;top:243.63px;font-family:'Liberation Sans', sans-serif;font-size:8.8px;line-height:9.831px;color:#222;white-space:pre;font-kerning:none;font-weight:normal;transform:scaleX(0.9478);transform-origin:0 0;-webkit-text-stroke:0.2px #222;">Constructs JSON object text from zero or more expressions. Returns a valid JSON object string of nvarchar(max)</div>
<div style="position:absolute;left:313.36px;top:253.63px;font-family:'Liberation Sans', sans-serif;font-size:8.8px;line-height:9.831px;color:#222;white-space:pre;font-kerning:none;font-weight:normal;transform:scaleX(1.0253);transform-origin:0 0;-webkit-text-stroke:0.2px #222;">type.</div>
</div></body></html>
